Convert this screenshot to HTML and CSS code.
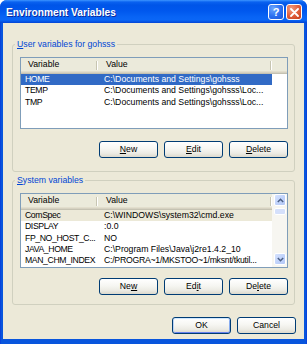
FILE: index.html
```html
<!DOCTYPE html>
<html>
<head>
<meta charset="utf-8">
<title>Environment Variables</title>
<link rel="stylesheet" href="styles.css">
</head>
<body>
<div class="window">
  <div class="titlebar">
    <span class="title">Environment Variables</span>
    <div class="caption-btns">
      <span class="cap help">?</span>
      <span class="cap close"><svg width="9" height="9" viewBox="0 0 9 9"><path d="M1 1 L8 8 M8 1 L1 8" stroke="#fff" stroke-width="1.8" stroke-linecap="round"/></svg></span>
    </div>
  </div>
  <div class="client">
    <div class="group">
      <span class="group-title"><u>U</u>ser variables for gohsss</span>
      <div class="list list-user">
        <div class="lv-main">
          <div class="lv-header">
            <span class="hcol h1">Variable</span>
            <span class="hcol h2">Value</span>
            <span class="hcol hrest"></span>
          </div>
          <div class="row sel"><span class="c1">HOME</span><span class="c2">C:\Documents and Settings\gohsss</span></div>
          <div class="row"><span class="c1">TEMP</span><span class="c2">C:\Documents and Settings\gohsss\Loc...</span></div>
          <div class="row"><span class="c1">TMP</span><span class="c2">C:\Documents and Settings\gohsss\Loc...</span></div>
        </div>
      </div>
      <div class="btnrow">
        <button class="btn"><u>N</u>ew</button>
        <button class="btn"><u>E</u>dit</button>
        <button class="btn"><u>D</u>elete</button>
      </div>
    </div>

    <div class="group group-sys">
      <span class="group-title"><u>S</u>ystem variables</span>
      <div class="list list-sys">
        <div class="lv-main">
          <div class="lv-header">
            <span class="hcol h1">Variable</span>
            <span class="hcol h2">Value</span>
          </div>
          <div class="row inactive"><span class="c1">ComSpec</span><span class="c2">C:\WINDOWS\system32\cmd.exe</span></div>
          <div class="row"><span class="c1">DISPLAY</span><span class="c2">:0.0</span></div>
          <div class="row"><span class="c1">FP_NO_HOST_C...</span><span class="c2">NO</span></div>
          <div class="row"><span class="c1">JAVA_HOME</span><span class="c2">C:\Program Files\Java\j2re1.4.2_10</span></div>
          <div class="row"><span class="c1">MAN_CHM_INDEX</span><span class="c2 tight">C:/PROGRA~1/MKSTOO~1/mksnt/tkutil...</span></div>
        </div>
        <div class="scrollbar">
          <span class="sb-btn"><svg width="7" height="5" viewBox="0 0 7 5"><path d="M0.8 4 L3.5 1.3 L6.2 4" fill="none" stroke="#4d6185" stroke-width="1.5"/></svg></span>
          <span class="sb-thumb"></span>
          <span class="sb-track"></span>
          <span class="sb-btn"><svg width="7" height="5" viewBox="0 0 7 5"><path d="M0.8 1 L3.5 3.7 L6.2 1" fill="none" stroke="#4d6185" stroke-width="1.5"/></svg></span>
        </div>
      </div>
      <div class="btnrow">
        <button class="btn">Ne<u>w</u></button>
        <button class="btn">Ed<u>i</u>t</button>
        <button class="btn">De<u>l</u>ete</button>
      </div>
    </div>

    <div class="dialog-btns">
      <button class="btn default">OK</button>
      <button class="btn">Cancel</button>
    </div>
  </div>
</div>
</body>
</html>
```

FILE: styles.css
```css
* { box-sizing: border-box; }
html, body { margin: 0; padding: 0; background: #ffffff; }
body {
  font-family: "Liberation Sans", Arial, sans-serif;
  font-size: 8.7px;
  color: #000;
}
.window {
  width: 307px;
  height: 344px;
  display: flex;
  flex-direction: column;
  background: linear-gradient(90deg, #0831d9 0px, #0855dd 1px, #0855dd 306px, #0831d9 307px);
  border-radius: 7px 7px 0 0;
  overflow: hidden;
}
.titlebar {
  height: 23px;
  flex: none;
  display: flex;
  align-items: center;
  padding: 0 5px 0 6px;
  background: linear-gradient(180deg, #3d95ff 0px, #0a62f0 2px, #0055e8 5px, #0058ee 11px, #0864f5 17px, #0a66f6 20px, #0550e0 22px, #0343d4 23px);
}
.title {
  flex: 1;
  color: #fff;
  font-weight: bold;
  font-size: 10.2px;
  text-shadow: 1px 1px 0 #0c2a9c;
  padding-top: 1px;
}
.caption-btns { display: flex; gap: 2px; margin-top: 1px; }
.cap {
  width: 16px;
  height: 16px;
  border: 1px solid #fff;
  border-radius: 3px;
  display: flex;
  align-items: center;
  justify-content: center;
}
.help {
  background: radial-gradient(circle at 30% 25%, #6aa6ff 0%, #2a6ef0 55%, #1d56d6 100%);
  color: #fff;
  font-weight: bold;
  font-size: 11px;
  line-height: 1;
}
.close {
  background: radial-gradient(circle at 30% 25%, #f29b7e 0%, #e1603e 50%, #c43a18 100%);
}
.client {
  flex: 1;
  margin: 0 3px 5px;
  background: #ece9d8;
  display: flex;
  flex-direction: column;
  padding-top: 21px;
}
.group {
  margin: 0 9px;
  border: 1px solid #d0d0bf;
  border-radius: 3px;
  padding: 0 6px 13px 7px;
  display: flex;
  flex-direction: column;
}
.group-sys { margin-top: 8px; padding-bottom: 9px; }
.group-title {
  align-self: flex-start;
  margin: -6px 0 0 -5px;
  padding: 0 2px;
  line-height: 11px;
  background: #ece9d8;
  color: #0046d5;
}
.list {
  margin-top: 7px;
  border: 1px solid #7f9db9;
  background: #fff;
  display: flex;
  overflow: hidden;
}
.list-user { height: 72px; }
.list-sys { height: 75px; margin-top: 7px; }
.lv-main { flex: 1; display: flex; flex-direction: column; min-width: 0; }
.lv-header {
  display: flex;
  height: 16px;
  background: #ebeadb;
  box-shadow: inset 0 -1px #c5c2b2, inset 0 -2px #d6d2c2, inset 0 -3px #e2decd;
  line-height: 13px;
}
.hcol {
  height: 16px;
  white-space: nowrap;
  background:
    linear-gradient(#c7c5b2, #c7c5b2) no-repeat right 1px top 3px / 1px 9px,
    linear-gradient(#ffffff, #ffffff) no-repeat right 0 top 3px / 1px 9px;
}
.h1 { width: 77px; padding-left: 7px; }
.h2 { width: 174px; padding-left: 8px; }
.hrest { flex: 1; background: none; }
.row {
  display: flex;
  width: 251px;
  height: 11.25px;
  line-height: 11.25px;
  white-space: nowrap;
}
.row.sel { background: #316ac5; color: #fff; }
.row.inactive { background: #ece9d8; }
.c1 { width: 77px; flex: none; padding-left: 4px; letter-spacing: -0.4px; }
.c2 { width: 174px; flex: none; padding-left: 6px; overflow: hidden; }
.c2.tight { letter-spacing: -0.25px; }
.scrollbar {
  width: 15px;
  flex: none;
  background: #f7f6f1;
  display: flex;
  flex-direction: column;
  padding: 0 1px 2px 2px;
}
.sb-btn {
  height: 12px;
  flex: none;
  border: 1px solid #fff;
  border-radius: 2px;
  background: linear-gradient(135deg, #d7e3fd 0%, #c1d3fb 50%, #b4c8f6 100%);
  display: flex;
  align-items: center;
  justify-content: center;
}
.sb-thumb {
  height: 7px;
  margin-top: 2px;
  flex: none;
  border-radius: 2px;
  background: #d5e0fb;
  border: 1px solid #fff;
}
.sb-track { flex: 1; }
.btnrow {
  display: flex;
  justify-content: flex-end;
  gap: 6px;
  margin-top: 12px;
}
.group-sys .btnrow { margin-top: 10px; }
.btn {
  width: 59px;
  height: 17px;
  padding: 0;
  border: 1px solid #003c74;
  border-radius: 3px;
  background: linear-gradient(180deg, #ffffff 0%, #f6f6f2 45%, #ecebe4 75%, #dcd9cd 100%);
  font-family: "Liberation Sans", Arial, sans-serif;
  font-size: 8.7px;
  color: #000;
  line-height: 15px;
  text-align: center;
}
.btn.default {
  box-shadow: inset 0 1px #cee7ff, inset 1px 0 #bcd4f6, inset -1px 0 #89adf0, inset 0 -1px #6982ee;
}
.dialog-btns {
  display: flex;
  justify-content: flex-end;
  gap: 6px;
  margin: 12px 8px 0 0;
}
```
